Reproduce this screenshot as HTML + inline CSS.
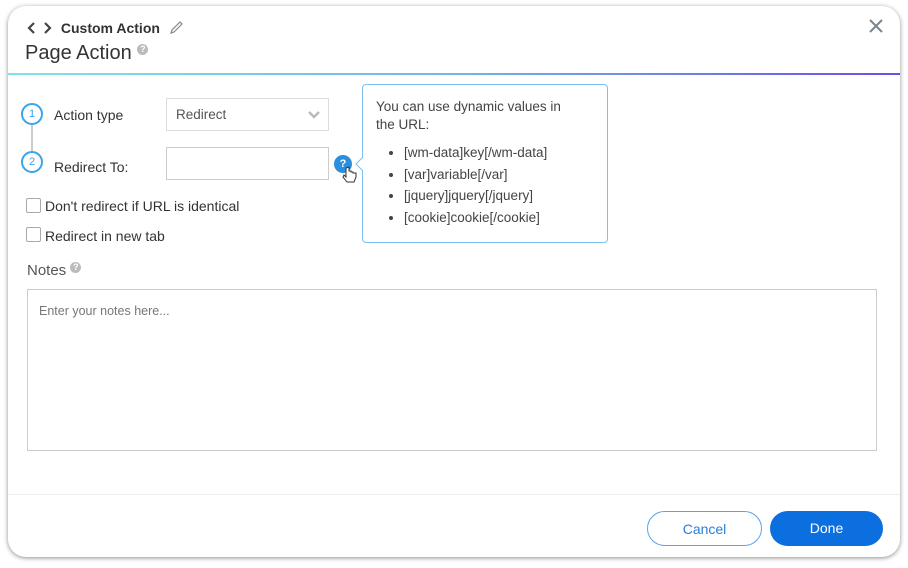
<!DOCTYPE html>
<html><head><style>
*{box-sizing:border-box;margin:0;padding:0}
body{width:908px;height:568px;background:#fff;font-family:"Liberation Sans",sans-serif;color:#333;position:relative;overflow:hidden}
.dlg{position:absolute;left:8px;top:6px;width:892px;height:551px;background:#fff;border-radius:18px;box-shadow:0 1px 5px rgba(0,0,0,.45);overflow:hidden}
.abs{position:absolute}
.grad{position:absolute;left:0;top:67px;width:892px;height:2px;background:linear-gradient(90deg,#7fe3ea,#74b5e8 50%,#6a4fe6)}
.lbl{font-size:14px;color:#333}
.circ{position:absolute;width:22px;height:22px;border:2px solid #3aa4ea;border-radius:50%;font-size:11px;color:#3aa4ea;text-align:center;line-height:18px;background:#fff}
.inp{position:absolute;border:1px solid #ccc;background:#fff}
.cb{position:absolute;width:15px;height:15px;border:1px solid #aaa;border-radius:2px}
.q{display:inline-block;width:11px;height:11px;border-radius:50%;background:#bbb;color:#fff;font-size:9px;font-weight:bold;text-align:center;line-height:11px;vertical-align:top}
.tip{position:absolute;left:354px;top:78px;width:246px;height:159px;border:1px solid #7cc0f0;border-radius:4px;background:#fff;font-size:13.5px;color:#444;padding:13px 0 0 13px;line-height:18px}
.tip ul{margin-top:8px;padding-left:28px;line-height:21.5px}
.btn{position:absolute;top:505px;height:35px;border-radius:18px;font-size:14px;text-align:center;line-height:34px}
</style></head><body>
<div class="dlg">
 <div class="abs" style="left:19px;top:14px;font-size:14px;font-weight:bold;color:#333">
  <svg width="26" height="14" style="vertical-align:-2px"><path d="M7 2 L2 7 L7 12 M18 2 L23 7 L18 12" stroke="#444" stroke-width="2.2" fill="none"/></svg>
  <span style="margin-left:4px">Custom Action</span>
  <svg width="16" height="16" style="vertical-align:-3px;margin-left:4px"><path d="M3 13 L4 10 L12 2 L14 4 L6 12 Z" stroke="#888" stroke-width="1.2" fill="none"/></svg>
 </div>
 <div class="abs" style="left:17px;top:36px;font-size:20px;color:#333">Page Action <span class="q" style="margin-top:2px">?</span></div>
 <svg class="abs" style="left:860px;top:12px" width="16" height="16"><path d="M2 2 L14 14 M14 2 L2 14" stroke="#7a8590" stroke-width="2"/></svg>
 <div class="grad"></div>

 <div class="abs" style="left:23px;top:115px;width:2px;height:45px;background:#ccc"></div>
 <div class="circ" style="left:13px;top:97px">1</div>
 <div class="circ" style="left:13px;top:145px">2</div>
 <div class="abs lbl" style="left:46px;top:101px">Action type</div>
 <div class="abs lbl" style="left:46px;top:153px">Redirect To:</div>
 <div class="inp" style="left:158px;top:92px;width:163px;height:33px;border-color:#ddd"><span style="position:absolute;left:9px;top:8px;font-size:13.5px;color:#555">Redirect</span>
  <svg class="abs" style="left:141px;top:12px" width="12" height="8"><path d="M1 1 L6 6 L11 1" stroke="#bbb" stroke-width="2.5" fill="none"/></svg></div>
 <div class="inp" style="left:158px;top:141px;width:163px;height:33px"></div>
 <div class="abs" style="left:326px;top:149px;width:18px;height:18px;border-radius:50%;background:#2b8fe0;color:#fff;font-size:11px;font-weight:bold;text-align:center;line-height:18px">?</div>
 <svg class="abs" style="left:334px;top:160px" width="16" height="20"><path d="M4 2 v9 l-2 -2 l-1 2 l4 5 h7 l2-5 v-4 h-3 v-1 h-2 v-1 h-2 v-4 z" fill="#fff" stroke="#333" stroke-width="1"/></svg>
 <div class="tip">You can use dynamic values in<br>the URL:
  <ul><li>[wm-data]key[/wm-data]</li><li>[var]variable[/var]</li><li>[jquery]jquery[/jquery]</li><li>[cookie]cookie[/cookie]</li></ul>
 </div>
 <svg class="abs" style="left:347px;top:151px" width="8" height="14"><path d="M8 0 L1 7 L8 14" fill="#fff" stroke="#7cc0f0"/></svg>

 <div class="cb" style="left:18px;top:192px"></div>
 <div class="abs lbl" style="left:37px;top:192px">Don't redirect if URL is identical</div>
 <div class="cb" style="left:18px;top:221px"></div>
 <div class="abs lbl" style="left:37px;top:222px">Redirect in new tab</div>
 <div class="abs" style="left:19px;top:256px;font-size:15px;color:#555">Notes <span class="q">?</span></div>
 <div class="inp" style="left:19px;top:283px;width:850px;height:162px;border-color:#ccc"><span style="position:absolute;left:11px;top:14px;font-size:12.5px;color:#777">Enter your notes here...</span></div>
 <div class="abs" style="left:0;top:488px;width:892px;height:1px;background:#eceef2"></div>
 <div class="btn" style="left:639px;width:115px;border:1.5px solid #5aa3ea;color:#2a7fd6">Cancel</div>
 <div class="btn" style="left:762px;width:113px;background:#0b6fe0;color:#fff">Done</div>
</div>
</body></html>
